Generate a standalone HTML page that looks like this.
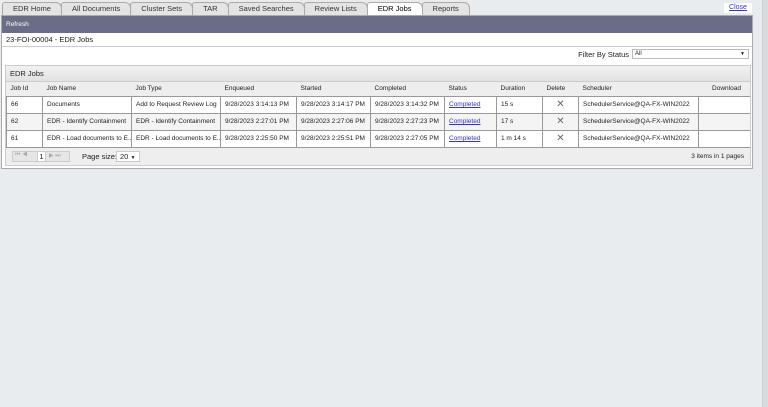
<!DOCTYPE html><html><head><style>
*{box-sizing:border-box;margin:0;padding:0}
body{width:768px;height:407px;background:#e9ecee;font-family:"Liberation Sans",sans-serif;font-size:7px;color:#222;position:relative;overflow:hidden}
.tabs{position:absolute;top:2px;left:2px;height:13px;display:flex}
.tab{height:13px;padding:0 10px;border:1px solid #aaa;border-bottom:none;border-radius:3px 6px 0 0;background:#e4e4e4;font-size:7.5px;line-height:12px;color:#333;margin-right:-1px}
.tab.a{background:#fff;color:#000}
.close{position:absolute;left:724px;top:3px;width:28px;height:10px;background:#fff;color:#33c;text-decoration:underline;font-size:7px;line-height:10px;text-align:center}
.scroll{position:absolute;left:762px;top:0;width:6px;height:407px;background:#d8dadc;border-left:1px solid #ccc}
.panel{position:absolute;left:1px;top:15px;width:752px;height:154px;background:#fff;border:1px solid #aaa}
.bar{height:17px;background:#6b6d88;color:#fff;font-size:6.5px;line-height:17px;padding-left:4px}
.title{height:14px;border-bottom:1px solid #ccc;font-size:7.5px;line-height:13px;padding-left:4px}
.filter{position:absolute;right:3px;top:33px;font-size:7.5px;display:flex;align-items:center}
.sel{width:117px;height:10px;border:1px solid #bbb;margin-left:3px;font-size:6px;padding-left:2px;line-height:9px;position:relative}
.grid{position:absolute;left:3px;top:49px;width:746px;height:101px;border:1px solid #ccc;background:#eee;overflow:hidden}
.gh{height:16px;background:linear-gradient(#f2f2f2,#e2e2e2);font-size:7.5px;line-height:16px;padding-left:4px;border-bottom:1px solid #ccc}
table{border-collapse:collapse;width:100%;table-layout:fixed}
th{font-weight:normal;text-align:left;height:14px;padding-left:4px;font-size:6.5px;background:#eee}
td{height:17px;padding-left:4px;border:1px solid #999;background:#fff;font-size:6.5px;white-space:nowrap;overflow:hidden}
tr.alt td{background:#f4f4f4}
a{color:#33c;text-decoration:underline}
.x{text-align:center;color:#667;font-size:10px;padding:0}
.pager{height:17px;position:relative;font-size:7.5px}
</style></head><body>
<div class="tabs"><div class="tab">EDR Home</div><div class="tab">All Documents</div><div class="tab">Cluster Sets</div><div class="tab">TAR</div><div class="tab">Saved Searches</div><div class="tab">Review Lists</div><div class="tab a">EDR Jobs</div><div class="tab">Reports</div></div>
<div class="close">Close</div>
<div class="scroll"></div>
<div class="panel">
<div class="bar">Refresh</div>
<div class="title">23-FOI-00004 - EDR Jobs</div>
<div class="filter">Filter By Status <div class="sel">All<span style="position:absolute;right:3px;font-size:5px">▼</span></div></div>
<div class="grid">
<div class="gh">EDR Jobs</div>
<table>
<colgroup><col style="width:36px"><col style="width:89px"><col style="width:89px"><col style="width:76px"><col style="width:74px"><col style="width:74px"><col style="width:52px"><col style="width:46px"><col style="width:36px"><col style="width:120px"><col style="width:52px"></colgroup>
<tr><th>Job Id</th><th>Job Name</th><th>Job Type</th><th>Enqueued</th><th>Started</th><th>Completed</th><th>Status</th><th>Duration</th><th>Delete</th><th>Scheduler</th><th style="text-align:center">Download</th></tr>
<tr><td>66</td><td>Documents</td><td>Add to Request Review Log</td><td>9/28/2023 3:14:13 PM</td><td>9/28/2023 3:14:17 PM</td><td>9/28/2023 3:14:32 PM</td><td><a>Completed</a></td><td>15 s</td><td class="x">✕</td><td>SchedulerService@QA-FX-WIN2022</td><td></td></tr>
<tr class="alt"><td>62</td><td>EDR - Identify Containment</td><td>EDR - Identify Containment</td><td>9/28/2023 2:27:01 PM</td><td>9/28/2023 2:27:06 PM</td><td>9/28/2023 2:27:23 PM</td><td><a>Completed</a></td><td>17 s</td><td class="x">✕</td><td>SchedulerService@QA-FX-WIN2022</td><td></td></tr>
<tr><td>61</td><td>EDR - Load documents to E...</td><td>EDR - Load documents to E...</td><td>9/28/2023 2:25:50 PM</td><td>9/28/2023 2:25:51 PM</td><td>9/28/2023 2:27:05 PM</td><td><a>Completed</a></td><td>1 m 14 s</td><td class="x">✕</td><td>SchedulerService@QA-FX-WIN2022</td><td></td></tr>
</table>
<div class="pager">
<span style="position:absolute;left:6px;top:3px;width:58px;height:11px;border:1px solid #ccc;background:#e6e6e6"></span>
<span style="position:absolute;left:9px;top:4px;color:#aaa;font-size:6px">⏮ ◀</span>
<span style="position:absolute;left:31px;top:3px;width:9px;height:11px;background:#fff;border:1px solid #ccc;text-align:center;line-height:10px">1</span>
<span style="position:absolute;left:43px;top:4px;color:#aaa;font-size:6px">▶ ⏭</span>
<span style="position:absolute;left:76px;top:4px">Page size:</span>
<span style="position:absolute;left:110px;top:3px;width:24px;height:11px;background:#fff;border:1px solid #ccc;line-height:10px;padding-left:3px">20 <span style="font-size:5px">▼</span></span>
<span style="position:absolute;right:6px;top:5px;font-size:6.5px">3 items in 1 pages</span>
</div>
</div>
</div>
</body></html>
